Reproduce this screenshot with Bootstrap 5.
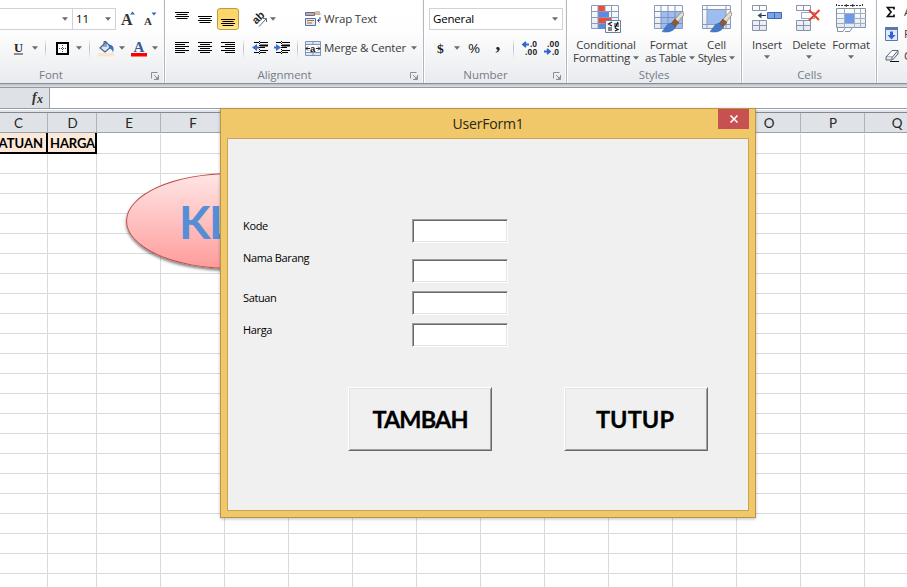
<!DOCTYPE html>
<html lang="id">
<head>
<meta charset="utf-8">
<meta name="viewport" content="width=device-width, initial-scale=1">
<title>UserForm1</title>
<link href="https://cdn.jsdelivr.net/npm/bootstrap@5.3.0/dist/css/bootstrap.min.css" rel="stylesheet">
<style>
html,body{height:587px;overflow:hidden}
body{width:907px;background:#fff;font-family:"Open Sans","Noto Sans",sans-serif;font-size:11.5px;line-height:13px;color:#3b3b3b;position:relative}
svg{display:block;overflow:visible;flex:none}
.ribbon{height:84px;letter-spacing:-.18px;background:linear-gradient(#fff 0,#fefefe 30px,#f3f4f6 58px,#e8ebef 83px);border-bottom:1px solid #8b8e94}
.rgroup{border-right:1px solid #b4b8be;box-shadow:1px 0 #fff,inset -1px 0 #f8f9fa;height:83px;flex:none}
.g-font{width:165px}.g-align{width:259px}.g-num{width:143px}.g-style{width:175px}.g-cell{width:135px}.g-edit{width:30px}
.tools{display:grid;height:22px;align-items:center;justify-items:start}
.tools span{position:relative;top:-.5px}
.t1{margin-top:8px}.t2{margin-top:7px}
.f1{grid-template-columns:73px 48px 23px 21px}
.f2{padding-left:13px;grid-template-columns:19px 13px 11px 20px 13px 9px 21px 12px 21px 8px}
.a1{padding-left:10px;grid-template-columns:23px 19px 35px 18px 27px 8px 19px 1fr}
.a2{padding-left:10px;grid-template-columns:23px 23px 22px 9px 22px 23px 8px 19px 87px 1fr}
.n1{padding-left:5px;grid-template-columns:134px}
.n2{padding-left:13px;grid-template-columns:17px 15px 27px 17px 9px 22px 1fr}
.combo{height:22px;border:1px solid #cfd2d7;background:#fff;width:100%;color:#000;padding:0 4px 0 3px}
.combo-first{border-left:0}.combo-size{margin-left:-1px;width:44px}
.vsep{width:1px;height:20px;background:linear-gradient(#fff,#b9bdc4 50%,#eef0f2)}
.picked{width:22px;height:22px;border:1px solid #c09a3e;border-radius:3px;background:linear-gradient(#fbd46c,#fdd767 50%,#ffe994);padding-left:3px;padding-top:10px}
.caption-row{margin-top:8px;height:15px;line-height:15px;color:#777c85;position:relative;letter-spacing:-.05px}
.caption-row span{display:block;text-align:center}
.f-cap{width:102px}.a-cap{width:239px}.n-cap{width:123px}.s-cap{width:174px}.c-cap{width:135px}
.launch{position:absolute;right:5px;top:5px}
.bigs{display:grid;height:67px;padding-top:4px;text-align:center;line-height:13px}
.bigs svg.pic{margin:0 auto 4px}
.s-grid{grid-template-columns:78px 47px 49px}
.c-grid{grid-template-columns:50px 34px 50px}
.inl{display:inline-block;margin-left:3px;vertical-align:2px}
.tight{letter-spacing:-.4px}
.edits{padding:4px 0 0 8px}
.edits>div{display:grid;grid-template-columns:19px 20px;align-items:center;overflow:hidden;height:15px;margin-bottom:7px;white-space:nowrap}
.fbar-gap{height:4px;background:linear-gradient(#b9bdc4,#dfe3e9);border-bottom:1px solid #94979d}
.fbar{height:21px;border-bottom:1px solid #989ba1}
.fx{width:50px;border-right:1px solid #9a9da3;padding-right:4px;background:#dee1e6}
.sheet-gap{height:3px;background:#dfe3ea;border-top:1px solid #fff}
.cols{height:21px;border-top:1px solid #85888e;border-bottom:1px solid #9da1a8;background:#dfe3e8;margin-left:-10px;width:930px;font:13.4px/20px Lato,"Liberation Sans",sans-serif;color:#262626}
.cols div{width:64px;flex:none;border-right:1px solid #b0b4ba;text-align:center;height:19px;padding-left:1px}
.cols .c-c,.heads .c-c{width:58px}.cols .c-c{padding-left:0}.cols .c-d,.heads .c-d{width:49px}
.sheet{height:454px;overflow:hidden;background:
 linear-gradient(#fff,#fff) 0 0/100% 1px no-repeat,
 linear-gradient(#d9dadc,#d9dadc) 47px 0/1px 100% no-repeat,
 linear-gradient(#d9dadc 1px,transparent 1px) 0 0/100% 20px,
 linear-gradient(#fff,#fff) 0 0/47px 100% no-repeat,
 linear-gradient(90deg,#d9dadc 1px,transparent 1px) 32px 0/64px 20px,
 #fff}
.heads{margin-left:-10px;height:21px;color:#000;font:bold 13px/21px Lato,"Liberation Sans",sans-serif}
.heads div{background:#fde9d9;border-right:2px solid #000;border-bottom:2px solid #000;height:21px;text-align:right;white-space:nowrap;flex:none}
.heads .c-c{padding-right:3px}
.heads .c-d{letter-spacing:-.15px}
.oval{position:absolute;left:126px;top:173px;width:211px;height:96px;border:1px solid #be4b48;border-radius:50%;background:linear-gradient(#ffe5e5,#ff9c9c);box-shadow:0 2px 3px rgba(0,0,0,.5);font:bold 46px/96px Lato,sans-serif;letter-spacing:-1.500px;color:#558ed5;padding-left:52px}
.uform{position:absolute;left:220px;top:108px;width:536px;height:410px;background:#f0c869;border:1px solid #b8954b;box-shadow:0 1px 3px rgba(0,0,0,.25)}
.ubar{height:29px}
.ubar h1{font:14px/29px "Open Sans",sans-serif;letter-spacing:-.2px;margin:0;color:#2b2618;width:534px;text-align:center}
.xbtn{width:31px;height:20px;background:#c75050;border:0;padding:0;margin-left:-37px;flex:none}
.ubody{margin:0 6px;height:373px;border:1px solid #c8a455;background:#f0f0f0;color:#000;font:11px/14px "Open Sans","DejaVu Sans",sans-serif;letter-spacing:-.36px;padding-top:80px}
.fld{display:grid;grid-template-columns:169px 96px;padding-left:15px}
.fld label{height:14px}
.sunk{width:96px;height:24px;background:#fff;border:1px solid;border-color:#a0a0a0 #fff #fff #a0a0a0;box-shadow:inset 1px 1px #696969,inset -1px -1px #e3e3e3;border-radius:0;padding:0 4px;outline:0}
.r1{height:32px}.r2{height:40px}.r3{height:32px}.r4{height:64px}
.r2 .sunk{margin-top:8px}
.acts{padding-left:120px;gap:72px}
.raised{width:144px;height:64px;border-radius:0;background:#f0f0f0;border:1px solid;border-color:#fff #696969 #696969 #fff;box-shadow:inset 1px 1px #e3e3e3,inset -1px -1px #a0a0a0;font:bold 23.5px/60px Lato,sans-serif;letter-spacing:-.9px;color:#000;padding:0;-webkit-text-stroke:.3px #000}
.raised+.raised{letter-spacing:.1px;padding-right:2px}
</style>
<script src="https://cdn.jsdelivr.net/npm/bootstrap@5.3.0/dist/js/bootstrap.bundle.min.js"></script>
</head>
<body>
<svg width="0" height="0" class="position-absolute">
 <defs>
  <symbol id="dn" viewBox="0 0 6 4"><path d="M0 .3h6L3 3.7z" fill="#6b6b6b"/></symbol>
  <symbol id="ln" viewBox="0 0 8 8"><path d="M.5 6.500V.5H6.500M3 3l3 3M7.500 3v4.500H3" fill="none" stroke="#8b9097"/><path d="M4 7.500h3.500V4z" fill="#8b9097"/></symbol>
  <symbol id="brush" viewBox="0 0 22 22"><path d="M20.500 0 12.500 8.500l3 3L22 4z" fill="#e4dccc" stroke="#8a8375" stroke-width=".8"/><path d="m13 8-4 4.500 4 3.500 3.800-4.500z" fill="#8c5a35" stroke="#6e4526" stroke-width=".6"/><path d="M9.500 12.500C4.500 12 4 17 0 20.500c6 1.500 12-.5 13.500-4.500z" fill="#4679c8" stroke="#345ea5" stroke-width=".6"/></symbol>
  <linearGradient id="cellg" x2="0" y2="1"><stop stop-color="#fff"/><stop offset="1" stop-color="#e3e9f2"/></linearGradient>
 </defs>
</svg>

<header class="ribbon d-flex">
 <section class="rgroup g-font">
  <div class="tools t1 f1">
   <div class="combo combo-first d-flex align-items-center justify-content-end"><svg width="6" height="4"><use href="#dn"/></svg></div>
   <div class="combo combo-size d-flex align-items-center justify-content-between"><span>11</span><svg width="6" height="4"><use href="#dn"/></svg></div>
   <svg width="15" height="16"><text x="0" y="14" font-family="Liberation Serif" font-weight="bold" font-size="16" fill="#333">A</text><path d="M9 3.500h5l-2.500-3z" fill="#3a66b5"/></svg>
   <svg width="14" height="16"><text x="0" y="14" font-family="Liberation Serif" font-weight="bold" font-size="11" fill="#333">A</text><path d="M7.500 1.500h5l-2.500 3z" fill="#3a66b5"/></svg>
  </div>
  <div class="tools t2 f2">
   <svg width="11" height="13"><text x="1" y="10" font-family="Liberation Serif" font-weight="bold" font-size="12.500" fill="#222">U</text><path d="M1 12h9" stroke="#222"/></svg>
   <svg width="6" height="4"><use href="#dn"/></svg><i class="vsep"></i>
   <svg width="13" height="13"><path d="M1 1h11v11H1z" fill="#fff" stroke="#000" stroke-width="2"/><path d="M6.500 3v8M3 6.500h8" stroke="#555" stroke-dasharray="1 1"/></svg>
   <svg width="6" height="4"><use href="#dn"/></svg><i class="vsep"></i>
   <svg width="16" height="17"><path d="m2 8 6-6 5 5-6 5z" fill="#dbe7f6" stroke="#47648f" stroke-width="1.200"/><path d="M6 7V1.500h2V7" fill="none" stroke="#47648f"/><path d="M10.500 4.500c5 0 6 4 4.500 8-1-3-2-4-4-4z" fill="#3c6fc0"/><path d="M0 13h16v3.500H0z" fill="#fde4d0"/></svg>
   <svg width="6" height="4"><use href="#dn"/></svg>
   <svg width="16" height="17"><text x="2.500" y="12" font-family="Liberation Serif" font-weight="bold" font-size="15" fill="#3b5998">A</text><path d="M0 13h16v3.500H0z" fill="#f00"/></svg>
   <svg width="6" height="4"><use href="#dn"/></svg>
  </div>
  <div class="caption-row"><span class="f-cap">Font</span><svg class="launch" width="8" height="8"><use href="#ln"/></svg></div>
 </section>

 <section class="rgroup g-align">
  <div class="tools t1 a1">
   <svg width="14" height="14"><path d="M0 .5h14M1.500 2.500h11M0 4.500h14M1.500 6.500h11" stroke="#000"/></svg>
   <svg width="14" height="14"><path d="M0 4.500h14M1.500 6.500h11M0 8.500h14M1.500 10.500h11" stroke="#000"/></svg>
   <div class="picked"><svg width="14" height="8"><path d="M0 .5h14M1.500 2.500h11M0 4.500h14M1.500 6.500h11" stroke="#000"/></svg></div>
   <svg width="16" height="16"><text transform="translate(5 13) rotate(-45)" x="-1" y="0" font-family="Liberation Sans" font-weight="bold" font-size="11" fill="#222">ab</text><path d="M7 15.500 14 8M11 7.500h3.500V11" fill="none" stroke="#666"/></svg>
   <svg width="6" height="4"><use href="#dn"/></svg><i></i>
   <svg width="16" height="16"><path d="M.5 1.500h9v3h-9zM.5 7.500h10v7H.500z" fill="#dce6f5" stroke="#57719c"/><path d="M1 3h14.500" stroke="#c06a1c"/><path d="M2 9.500h7M2 12h5" stroke="#c06a1c"/><path d="M10 1h5" fill="none" stroke="#888"/><path d="M15 6v3.500h-2.500M14.500 7.500l-2 2 2 2" fill="none" stroke="#44649b"/></svg>
   <span>Wrap Text</span>
  </div>
  <div class="tools t2 a2">
   <svg width="14" height="12"><path d="M0 .5h14M0 2.500h10M0 4.500h14M0 6.500h10M0 8.500h14M0 10.500h10" stroke="#000"/></svg>
   <svg width="14" height="12"><path d="M0 .5h14M2 2.500h10M0 4.500h14M2 6.500h10M0 8.500h14M2 10.500h10" stroke="#000"/></svg>
   <svg width="14" height="12"><path d="M0 .5h14M4 2.500h10M0 4.500h14M4 6.500h10M0 8.500h14M4 10.500h10" stroke="#000"/></svg>
   <i class="vsep"></i>
   <svg width="16" height="14"><path d="M2 1.500h5M2 11.500h5M8 1.500h8M8 11.500h6M8 9.500h8M8 6.500h5" stroke="#000"/><path d="M8 4.500h8" stroke="#000" stroke-width="2"/><path d="M7.500 0v14" stroke="#000" stroke-dasharray="1 1"/><path d="M5 5.500h2v2H5V10L0 6.500 5 3z" fill="#3c6fd0"/></svg>
   <svg width="16" height="14"><path d="M2 1.500h5M2 11.500h5M8 1.500h8M8 11.500h6M8 9.500h8M8 6.500h5" stroke="#000"/><path d="M8 4.500h8" stroke="#000" stroke-width="2"/><path d="M7.500 0v14" stroke="#000" stroke-dasharray="1 1"/><path d="M0 5.500h2V3l5 3.500L2 10V7.500H0z" fill="#3c6fd0"/></svg>
   <i class="vsep"></i>
   <svg width="16" height="15"><path d="M.5.5h15v14H.500z" fill="#dce6f5" stroke="#7d93b8"/><path d="M8 0v3M8 12v3M0 3.500h16M0 11.500h16" stroke="#7d93b8"/><path d="M1 4h14v7H1z" fill="#fff"/><path d="M1 7.500h4M11 7.500h4M3 5.500l-2 2 2 2M13 5.500l2 2-2 2" fill="none" stroke="#222"/><text x="5" y="10.500" font-size="9.500" font-weight="bold" font-family="Liberation Sans" fill="#111">a</text></svg>
   <span class="text-nowrap">Merge &amp; Center</span>
   <svg width="6" height="4"><use href="#dn"/></svg>
  </div>
  <div class="caption-row"><span class="a-cap">Alignment</span><svg class="launch" width="8" height="8"><use href="#ln"/></svg></div>
 </section>

 <section class="rgroup g-num">
  <div class="tools t1 n1"><div class="combo d-flex align-items-center justify-content-between"><span>General</span><svg width="6" height="4"><use href="#dn"/></svg></div></div>
  <div class="tools t2 n2">
   <svg width="8" height="14"><text x="0" y="11.500" font-family="Liberation Serif" font-weight="bold" font-size="13.500" fill="#222">$</text></svg>
   <svg width="6" height="4"><use href="#dn"/></svg>
   <svg width="12" height="12"><text x="-1" y="10.500" font-size="13" font-family="Open Sans" fill="#222" textLength="12" lengthAdjust="spacingAndGlyphs">%</text></svg>
   <svg width="6" height="12"><text x="-.5" y="8" font-family="Liberation Serif" font-weight="bold" font-size="19" fill="#222">,</text></svg>
   <i class="vsep"></i>
   <svg width="16" height="14"><text x="8" y="6" font-size="8.500" font-weight="600" font-family="Liberation Sans" fill="#222">.0</text><text x="3" y="13.500" font-size="8.500" font-weight="600" font-family="Liberation Sans" fill="#222" textLength="12">.00</text><path d="M7 3.500H2M4 .8 1 3.500l3 2.700" fill="none" stroke="#2f62c6" stroke-width="1.800"/></svg>
   <svg width="16" height="14"><text x="3" y="6" font-size="8.500" font-weight="600" font-family="Liberation Sans" fill="#222" textLength="12">.00</text><text x="8" y="13.500" font-size="8.500" font-weight="600" font-family="Liberation Sans" fill="#222">.0</text><path d="M0 10.500h5M3 7.800l3 2.700-3 2.700" fill="none" stroke="#2f62c6" stroke-width="1.800"/></svg>
  </div>
  <div class="caption-row"><span class="n-cap">Number</span><svg class="launch" width="8" height="8"><use href="#ln"/></svg></div>
 </section>

 <section class="rgroup g-style">
  <div class="bigs s-grid">
   <div><svg class="pic" width="30" height="30"><path d="M.5 1.500h27v23H.500z" fill="url(#cellg)" stroke="#8c9cb8"/><path d="M7 2h7v6H7z" fill="#ee4b3a"/><path d="M7 8h11v6H7z" fill="#5b8ae0"/><path d="M7 14h13v6H7z" fill="#ee4b3a"/><path d="M7 20h7v5H7z" fill="#5b8ae0"/><path d="M0 7.500h28M0 13.500h28M0 19.500h28M7 1v24M14 1v6M20.500 1v24" stroke="#8c9cb8"/><path d="M14.500 16.500h15v12h-15z" fill="#f5f8fc" stroke="#6d809e"/><path d="m21 18-3.500 2 3.500 2M17 24h4M17 26h4M23 20h5M23 22h5M27 18l-3 6M24 24l3 1.500-3 1.500" fill="none" stroke="#111" stroke-width="1.200"/></svg>Conditional<br>Formatting<svg class="inl" width="6" height="4"><use href="#dn"/></svg></div>
   <div><svg class="pic" width="30" height="30"><path d="M.5 1.500h28v23H.500z" fill="url(#cellg)" stroke="#8c9cb8"/><path d="M7 8h21v16H7z" fill="#9dbcf0"/><path d="M0 7.500h29M0 13.500h29M0 19.500h29M7 1v24M14 1v24M21 1v24" stroke="#7f94b8"/><use href="#brush" x="8" y="7" width="22" height="22"/></svg>Format<br><span class="text-nowrap tight">as Table<svg class="inl" width="6" height="4"><use href="#dn"/></svg></span></div>
   <div><svg class="pic" width="30" height="30"><path d="M.5 1.500h28v23H.500z" fill="url(#cellg)" stroke="#8c9cb8"/><path d="M5 6h19v15H5z" fill="#9dbcf0"/><path d="M0 5.500h29M0 20.500h29M5 1v24M24 1v24" stroke="#8c9cb8"/><use href="#brush" x="8" y="7" width="22" height="22"/></svg>Cell<br><span class="tight">Styles<svg class="inl" width="6" height="4"><use href="#dn"/></svg></span></div>
  </div>
  <div class="caption-row mt-0"><span class="s-cap">Styles</span></div>
 </section>

 <section class="rgroup g-cell">
  <div class="bigs c-grid">
   <div><svg class="pic" width="30" height="30"><g fill="url(#cellg)" stroke="#8793a8"><path d="M.5 1.500h14v5H.500zM.5 16.500h14v10H.500z"/><path d="M7.500 1v6M7.500 16v11M0 21.500h15"/></g><path d="M15.500 8.500h14v6h-14z" fill="#7aa3ec" stroke="#4468a8"/><path d="M22.500 8v7" stroke="#4468a8"/><path d="M14 11.500H7" stroke="#333"/><path d="m9.500 8.500-4 3 4 3z" fill="#2d4d80"/></svg>Insert<svg class="mx-auto mt-1 pt-0" width="6" height="4"><use href="#dn"/></svg></div>
   <div><svg class="pic" width="26" height="30"><g fill="url(#cellg)" stroke="#8793a8"><path d="M.5 1.500h14v5H.500zM.5 16.500h14v10H.500z"/><path d="M7.500 1v6M7.500 16v11M0 21.500h15"/></g><path d="M5.500 8.500h13v6h-13z" fill="none" stroke="#2c4da0" stroke-dasharray="1 1"/><path d="m13 6 10 10M23.500 6 13 16.500" stroke="#ea4129" stroke-width="2"/></svg>Delete<svg class="mx-auto mt-1" width="6" height="4"><use href="#dn"/></svg></div>
   <div><svg class="pic" width="30" height="30"><path d="M.5 0v3M26.500 0v3M2 1.500h24" stroke="#333" stroke-dasharray="2 1"/><path d="m11 0-3 1.500L11 3M16 0l3 1.500L16 3" fill="#333"/><path d="M.5 4.500h29v19H.500z" fill="url(#cellg)" stroke="#8793a8"/><path d="M9 9h9v11H9z" fill="#6e9aea"/><path d="M1 9.500h29M1 14.500h8M19 14.500h11M1 19.500h29M8.500 5v19M18.500 5v19M24.500 5v19" stroke="#a2aec2"/><path d="M1.500 24v3.500H7l2-3.500M9 27.500h5l2-3.500" fill="#fff" stroke="#8793a8"/></svg>Format<svg class="mx-auto mt-1" width="6" height="4"><use href="#dn"/></svg></div>
  </div>
  <div class="caption-row mt-0"><span class="c-cap">Cells</span></div>
 </section>

 <section class="g-edit edits overflow-hidden flex-shrink-0">
  <div><svg width="11" height="12"><path d="M9 3.500V1.500H2.500L6 6l-3.500 4.500H9V8.500" fill="none" stroke="#111" stroke-width="1.700"/></svg><span>A</span></div>
  <div><svg width="13" height="14"><path d="M.5.5h12v13H.500z" fill="#dfe9f8" stroke="#5b78ad"/><path d="M0 0h13v3H0z" fill="#5b78ad"/><path d="M5 4.500h3V8h2.500l-4 4.500L2.500 8H5z" fill="#2f66cf"/></svg><span>F</span></div>
  <div><svg width="14" height="13"><path d="m1 8 6-6.500h6L7.500 8z" fill="#fff" stroke="#59677c"/><path d="M1 8v3h6V8M7.500 11 13 5V1.500" fill="#dfe4ec" stroke="#59677c"/><path d="M5 12.500h9" stroke="#111"/></svg><span>C</span></div>
 </section>
</header>

<div class="fbar-gap"></div>
<div class="fbar d-flex"><div class="fx d-flex justify-content-end align-items-center"><svg width="13" height="14"><text x="0" y="11" font-family="Liberation Serif" font-style="italic" font-weight="bold" font-size="14" fill="#333">f</text><text x="5" y="11.500" font-family="Liberation Serif" font-style="italic" font-weight="bold" font-size="12" fill="#333">x</text></svg></div><div class="flex-grow-1 bg-white"></div></div>
<div class="sheet-gap"></div>
<div class="cols d-flex"><div class="c-c">C</div><div class="c-d">D</div><div>E</div><div>F</div><div></div><div></div><div></div><div></div><div></div><div></div><div></div><div></div><div>O</div><div>P</div><div>Q</div></div>
<main class="sheet"><div class="heads d-flex"><div class="c-c">ATUAN</div><div class="c-d">HARGA</div></div></main>

<div class="oval">KL</div>

<div class="uform">
 <div class="ubar d-flex"><h1>UserForm1</h1><button class="xbtn d-flex align-items-center justify-content-center" type="button"><svg width="8" height="8"><path d="m.5.5 7 7M7.500.5l-7 7" stroke="#fff" stroke-width="1.600"/></svg></button></div>
 <form class="ubody">
  <div class="fld r1"><label for="kode">Kode</label><input id="kode" class="sunk"></div>
  <div class="fld r2"><label for="nama">Nama Barang</label><input id="nama" class="sunk"></div>
  <div class="fld r3"><label for="satuan">Satuan</label><input id="satuan" class="sunk"></div>
  <div class="fld r4"><label for="harga">Harga</label><input id="harga" class="sunk"></div>
  <div class="acts d-flex"><button class="raised" type="button">TAMBAH</button><button class="raised" type="button">TUTUP</button></div>
 </form>
</div>
</body>
</html>
